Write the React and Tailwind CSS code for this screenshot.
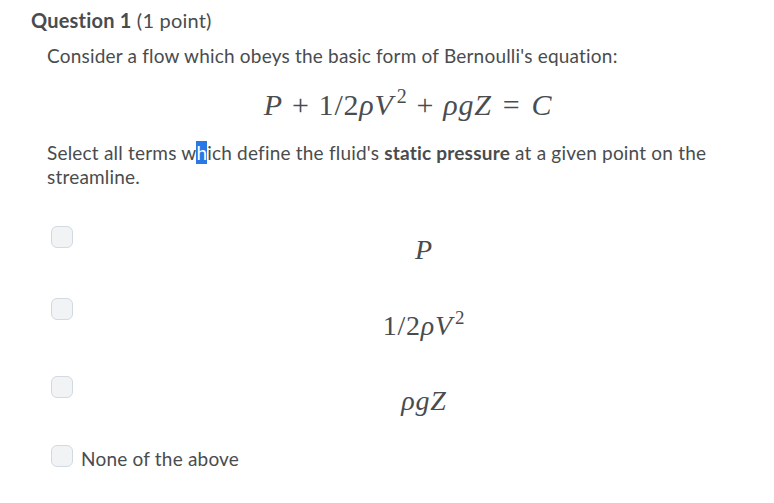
import React from "react";

const sans = { fontFamily: "Lato, 'Open Sans', sans-serif" };
const serif = "font-['Liberation_Serif',serif]";

function V({ children }) {
  return <i className="italic">{children}</i>;
}

function Box() {
  return (
    <span className="inline-block w-[22px] h-[22px] shrink-0 rounded-[6px] border border-[#d3d9e3] bg-[#f1f3f5]" />
  );
}

function Option({ children, rowClass, mathClass }) {
  return (
    <div className={`flex ${rowClass}`}>
      <div className="w-[27px] pl-[4px]">
        <Box />
      </div>
      <div className={`flex-1 text-center text-[#494c4e] ${serif} text-[28px] tracking-[0.8px] leading-none ${mathClass}`}>
        {children}
      </div>
    </div>
  );
}

export default function App() {
  return (
    <div className="w-[774px] h-[503px] bg-white text-[#494c4e] relative tracking-[0.2px]" style={sans}>
      <div className="pt-[8px] pl-[31px]">
        <h2 className="text-[20px] leading-[24px]">
          <span className="font-bold">Question 1</span> (1 point)
        </h2>
      </div>
      <div className="pl-[47px] pr-[50px]">
        <p className="mt-[12px] text-[19px] leading-[24px]">
          Consider a flow which obeys the basic form of Bernoulli's equation:
        </p>
        <div className={`mt-[16px] pl-[45px] h-[40px] flex items-center justify-center ${serif} text-[30px] text-[#4a4d50] tracking-[0.8px]`}>
          <span>
            <V>P</V>
            <span className="mx-[9px]">+</span>
            1/2<V>ρV</V>
            <sup className="text-[20px] relative top-[-12px] ml-[3px]">2</sup>
            <span className="mx-[9px]">+</span>
            <V>ρgZ</V>
            <span className="mx-[11px]">=</span>
            <V>C</V>
          </span>
        </div>
        <p className="mt-[17px] text-[19px] leading-[24px]">
          Select all terms w<span className="bg-[#2a78e4] text-white">h</span>ich define the fluid's{" "}
          <span className="font-bold">static pressure</span> at a given point on the streamline.
        </p>
      </div>
      <div className="pl-[47px] mt-[37px]">
        <Option rowClass="h-[72px]" mathClass="pt-[10px]">
          <V>P</V>
        </Option>
        <Option rowClass="h-[78px]" mathClass="pt-[14px]">
          1/2<V>ρV</V>
          <sup className="text-[19px] relative top-[-11px] ml-[2px]">2</sup>
        </Option>
        <Option rowClass="h-[69px]" mathClass="pt-[11px]">
          <V>ρgZ</V>
        </Option>
        <div className="flex items-center">
          <div className="w-[34px] pl-[4px]">
            <Box />
          </div>
          <span className="text-[19px] leading-[24px]">None of the above</span>
        </div>
      </div>
    </div>
  );
}
